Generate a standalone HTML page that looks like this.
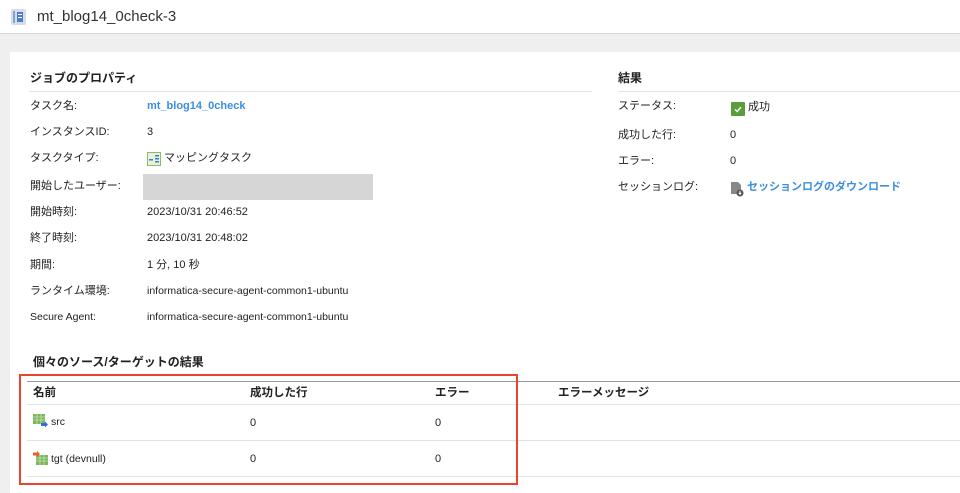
<!DOCTYPE html>
<html><head><meta charset="utf-8"><style>
*{margin:0;padding:0;box-sizing:border-box}
body{width:960px;height:493px;overflow:hidden;background:#efefef;font-family:"Liberation Sans","Noto Sans CJK JP",sans-serif;color:#222;position:relative}
.hdr{position:absolute;left:0;top:0;width:960px;height:34px;background:#fff;border-bottom:1px solid #d8d8d8}
.hdr .t{position:absolute;left:37px;top:8px;font-size:15px;line-height:18px;color:#333}
.panel{position:absolute;left:10px;top:52px;width:950px;height:441px;background:#fff}
.a{position:absolute;font-size:11px;line-height:16px;white-space:nowrap}
.h{font-weight:bold;font-size:12px}
.line{position:absolute;height:1px;background:#e2e2e2}
.link{color:#3b8fe0;font-weight:bold}
</style></head><body>
<div class="hdr">
<svg style="position:absolute;left:10px;top:8px" width="18" height="18" viewBox="0 0 18 18"><rect x="1" y="1" width="15" height="16" rx="2" fill="#d6dde8"/><rect x="3" y="3" width="2" height="12" fill="#7da3d8"/><rect x="7" y="4" width="6" height="10" fill="#4a7cc7"/><rect x="8" y="6" width="4" height="1" fill="#fff"/><rect x="8" y="9" width="4" height="1" fill="#fff"/></svg>
<div class="t">mt_blog14_0check-3</div></div>
<div class="panel"></div>
<div class="a h" style="left:30px;top:70px">ジョブのプロパティ</div>
<div class="line" style="left:29px;top:91px;width:563px"></div>
<div class="a" style="left:30px;top:98px">タスク名:</div><div class="a link" style="left:147px;top:98px">mt_blog14_0check</div>
<div class="a" style="left:30px;top:124px">インスタンスID:</div><div class="a" style="left:147px;top:124px">3</div>
<div class="a" style="left:30px;top:150px">タスクタイプ:</div>
<svg style="position:absolute;left:147px;top:152px" width="14" height="14"><rect x="0.5" y="0.5" width="13" height="13" fill="#e6f2dc" stroke="#8bbf5c"/><rect x="2" y="7" width="4" height="1.5" fill="#3b7cd6"/><rect x="8" y="3" width="4" height="1.5" fill="#3b7cd6"/><rect x="8" y="6" width="4" height="1.5" fill="#3b7cd6"/><rect x="8" y="9" width="4" height="1.5" fill="#3b7cd6"/></svg>
<div class="a" style="left:164px;top:150px">マッピングタスク</div>
<div class="a" style="left:30px;top:178px">開始したユーザー:</div>
<div style="position:absolute;left:143px;top:174px;width:230px;height:26px;background:#d6d6d6"></div>
<div class="a" style="left:30px;top:204px">開始時刻:</div><div class="a" style="left:147px;top:204px">2023/10/31 20:46:52</div>
<div class="a" style="left:30px;top:230px">終了時刻:</div><div class="a" style="left:147px;top:230px">2023/10/31 20:48:02</div>
<div class="a" style="left:30px;top:257px">期間:</div><div class="a" style="left:147px;top:257px">1 分, 10 秒</div>
<div class="a" style="left:30px;top:283px">ランタイム環境:</div><div class="a" style="left:147px;top:283px;font-size:10.5px">informatica-secure-agent-common1-ubuntu</div>
<div class="a" style="left:30px;top:309px;font-size:10.5px">Secure Agent:</div><div class="a" style="left:147px;top:309px;font-size:10.5px">informatica-secure-agent-common1-ubuntu</div>

<div class="a h" style="left:618px;top:70px">結果</div>
<div class="line" style="left:618px;top:91px;width:342px"></div>
<div class="a" style="left:618px;top:98px">ステータス:</div>
<svg style="position:absolute;left:731px;top:102px" width="14" height="14"><rect width="14" height="14" rx="1" fill="#5a9e3a"/><path d="M4 7.5 L6.2 9.5 L10 5" stroke="#fff" stroke-width="1.4" fill="none"/></svg>
<div class="a" style="left:748px;top:99px">成功</div>
<div class="a" style="left:618px;top:127px">成功した行:</div><div class="a" style="left:730px;top:127px">0</div>
<div class="a" style="left:618px;top:153px">エラー:</div><div class="a" style="left:730px;top:153px">0</div>
<div class="a" style="left:618px;top:179px">セッションログ:</div>
<svg style="position:absolute;left:730px;top:181px" width="14" height="16"><path d="M1 1h7l3 3v9H1z" fill="#888"/><circle cx="10" cy="12" r="3.5" fill="#555"/><path d="M10 10v3M8.8 12l1.2 1.3 1.2-1.3" stroke="#fff" fill="none"/></svg>
<div class="a link" style="left:747px;top:179px">セッションログのダウンロード</div>

<div class="a h" style="left:33px;top:354px">個々のソース/ターゲットの結果</div>
<div style="position:absolute;left:27px;top:381px;width:933px;height:1px;background:#999"></div>
<div class="a h" style="left:33px;top:385px;font-size:11.5px">名前</div>
<div class="a h" style="left:250px;top:385px;font-size:11.5px">成功した行</div>
<div class="a h" style="left:435px;top:385px;font-size:11.5px">エラー</div>
<div class="a h" style="left:558px;top:385px;font-size:11.5px">エラーメッセージ</div>
<div class="line" style="left:27px;top:404px;width:933px"></div>
<svg style="position:absolute;left:33px;top:414px" width="15" height="14"><rect x="0" y="0" width="12" height="10" fill="#7cb55a"/><path d="M0 3h12M0 6h12M4 0v10M8 0v10" stroke="#c8e4b4" stroke-width="0.8"/><rect x="8" y="9" width="5" height="3" fill="#2f6fd6"/><path d="M12 7.5l3 3-3 3z" fill="#2f6fd6"/></svg>
<div class="a" style="left:51px;top:414px;font-size:10.5px">src</div>
<div class="a" style="left:250px;top:415px">0</div><div class="a" style="left:435px;top:415px">0</div>
<div class="line" style="left:27px;top:440px;width:933px"></div>
<svg style="position:absolute;left:33px;top:451px" width="15" height="15"><rect x="3" y="4" width="12" height="10" fill="#7cb55a"/><path d="M3 7h12M3 10h12M7 4v10M11 4v10" stroke="#c8e4b4" stroke-width="0.8"/><rect x="0" y="1.5" width="4" height="3" fill="#e8622c"/><path d="M4 0l3 3-3 3z" fill="#e8622c"/></svg>
<div class="a" style="left:51px;top:451px;font-size:10.5px">tgt (devnull)</div>
<div class="a" style="left:250px;top:451px">0</div><div class="a" style="left:435px;top:451px">0</div>
<div class="line" style="left:27px;top:476px;width:933px"></div>
<div style="position:absolute;left:19px;top:374px;width:499px;height:111px;border:2px solid #e8452c"></div>
</body></html>
